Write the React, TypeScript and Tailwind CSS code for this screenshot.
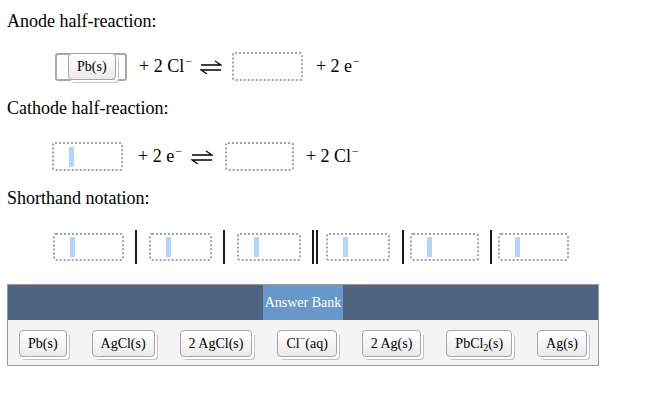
import React from 'react';

const serif = { fontFamily: '"Liberation Serif", "Times New Roman", serif' };

function Minus() {
  return <span className="relative -top-[7px] ml-[1px] text-[12px]">−</span>;
}

function Equil() {
  return (
    <svg width="22" height="14" viewBox="0 0 22 14" className="shrink-0">
      <path d="M1 5 H21 L15 1" fill="none" stroke="#000" strokeWidth="1.3" />
      <path d="M21 10 H1 L7 14" fill="none" stroke="#000" strokeWidth="1.3" />
    </svg>
  );
}

function Slot({ w, h = 'h-[29px]', cursor }: { w: string; h?: string; cursor?: boolean }) {
  return (
    <div className={`${w} ${h} shrink-0 rounded-[3px] border-2 border-dotted border-[#a3a3a3] flex items-center`}>
      {cursor && <div className="ml-[15px] w-[5px] h-[20px] bg-[#b3d6ff]" />}
    </div>
  );
}

function Chip({ children }: { children: React.ReactNode }) {
  return (
    <div className="h-[27px] px-[8px] flex items-center rounded-[4px] border border-[#a6a6a6] bg-linear-to-b from-white to-[#ebebeb] text-[14px] text-black shadow-[2px_2px_0_0_#fff,3px_3px_0_0_#c2c2c2] whitespace-nowrap">
      {children}
    </div>
  );
}

function Bar() {
  return <div className="w-[2px] h-[34px] bg-[#1a1a1a] shrink-0" />;
}

export default function App() {
  return (
    <div className="w-[671px] h-[402px] bg-white text-black pl-[7px] pt-[10px]" style={serif}>
      <div className="text-[18px] leading-[22px]">Anode half-reaction:</div>

      <div className="mt-[20px] ml-[48px] flex items-center text-[18px] h-[29px]">
        <div className="w-[72px] h-[28px] rounded-[3px] border-2 border-[#a8a8a8] flex items-center pl-[11px] shrink-0">
          <Chip>Pb(s)</Chip>
        </div>
        <span className="ml-[12px] whitespace-nowrap">+ 2 Cl<Minus /></span>
        <span className="ml-[8px]"><Equil /></span>
        <div className="ml-[10px]"><Slot w="w-[71px]" /></div>
        <span className="ml-[13px] whitespace-nowrap">+ 2 e<Minus /></span>
      </div>

      <div className="mt-[16px] text-[18px] leading-[22px]">Cathode half-reaction:</div>

      <div className="mt-[23px] ml-[45px] flex items-center text-[18px] h-[29px]">
        <Slot w="w-[71px]" cursor />
        <span className="ml-[15px] whitespace-nowrap">+ 2 e<Minus /></span>
        <span className="ml-[9px]"><Equil /></span>
        <div className="ml-[12px]"><Slot w="w-[69px]" /></div>
        <span className="ml-[12px] whitespace-nowrap">+ 2 Cl<Minus /></span>
      </div>

      <div className="mt-[16px] text-[18px] leading-[22px]">Shorthand notation:</div>

      <div className="mt-[21px] ml-[46px] flex items-center h-[34px]">
        <Slot w="w-[71px]" h="h-[28px]" cursor />
        <div className="ml-[11px]"><Bar /></div>
        <div className="ml-[12px]"><Slot w="w-[63px]" h="h-[28px]" cursor /></div>
        <div className="ml-[11px]"><Bar /></div>
        <div className="ml-[12px]"><Slot w="w-[64px]" h="h-[28px]" cursor /></div>
        <div className="ml-[11px] flex gap-[2px]"><Bar /><Bar /></div>
        <div className="ml-[8px]"><Slot w="w-[64px]" h="h-[28px]" cursor /></div>
        <div className="ml-[12px]"><Bar /></div>
        <div className="ml-[6px]"><Slot w="w-[69px]" h="h-[28px]" cursor /></div>
        <div className="ml-[11px]"><Bar /></div>
        <div className="ml-[6px]"><Slot w="w-[71px]" h="h-[28px]" cursor /></div>
      </div>

      <div className="mt-[20px] w-[592px] border border-[#9a9a9a]">
        <div className="h-[35px] bg-[#4d6580] flex justify-center">
          <div className="h-full px-[2px] bg-[#6897c9] text-white text-[14px] flex items-center">Answer Bank</div>
        </div>
        <div className="h-[45px] bg-[#f4f4f4] pt-[10px] px-[11px] flex justify-between items-start">
          <Chip>Pb(s)</Chip>
          <Chip>AgCl(s)</Chip>
          <Chip>2 AgCl(s)</Chip>
          <Chip>Cl<span className="relative -top-[5px] text-[10px]">−</span>(aq)</Chip>
          <Chip>2 Ag(s)</Chip>
          <Chip>PbCl<span className="relative top-[4px] text-[10px]">2</span>(s)</Chip>
          <Chip>Ag(s)</Chip>
        </div>
      </div>
    </div>
  );
}
